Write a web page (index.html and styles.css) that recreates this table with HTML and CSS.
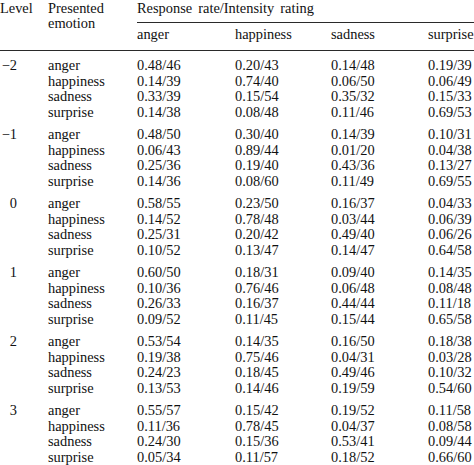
FILE: index.html
```html
<!DOCTYPE html>
<html>
<head>
<meta charset="utf-8">
<link rel="stylesheet" href="styles.css">
</head>
<body>
<div class="frame">
<table class="tbl">
  <colgroup>
    <col class="c-level"><col class="c-emo"><col class="c-d1"><col class="c-d2"><col class="c-d3"><col class="c-d4">
  </colgroup>
  <thead>
    <tr class="h1">
      <th rowspan="2" class="hl">Level</th>
      <th rowspan="2" class="hl">Presented<br>emotion</th>
      <th colspan="4" class="span">Response rate/Intensity rating</th>
    </tr>
    <tr class="h2">
      <th>anger</th><th>happiness</th><th>sadness</th><th>surprise</th>
    </tr>
  </thead>
  <tbody>
    <tr class="first"><td><span class="lv">−2</span></td><td>anger</td><td>0.48/46</td><td>0.20/43</td><td>0.14/48</td><td>0.19/39</td></tr>
    <tr><td></td><td>happiness</td><td>0.14/39</td><td>0.74/40</td><td>0.06/50</td><td>0.06/49</td></tr>
    <tr><td></td><td>sadness</td><td>0.33/39</td><td>0.15/54</td><td>0.35/32</td><td>0.15/33</td></tr>
    <tr><td></td><td>surprise</td><td>0.14/38</td><td>0.08/48</td><td>0.11/46</td><td>0.69/53</td></tr>
  </tbody>
  <tbody>
    <tr class="first"><td><span class="lv">−1</span></td><td>anger</td><td>0.48/50</td><td>0.30/40</td><td>0.14/39</td><td>0.10/31</td></tr>
    <tr><td></td><td>happiness</td><td>0.06/43</td><td>0.89/44</td><td>0.01/20</td><td>0.04/38</td></tr>
    <tr><td></td><td>sadness</td><td>0.25/36</td><td>0.19/40</td><td>0.43/36</td><td>0.13/27</td></tr>
    <tr><td></td><td>surprise</td><td>0.14/36</td><td>0.08/60</td><td>0.11/49</td><td>0.69/55</td></tr>
  </tbody>
  <tbody>
    <tr class="first"><td><span class="lv">0</span></td><td>anger</td><td>0.58/55</td><td>0.23/50</td><td>0.16/37</td><td>0.04/33</td></tr>
    <tr><td></td><td>happiness</td><td>0.14/52</td><td>0.78/48</td><td>0.03/44</td><td>0.06/39</td></tr>
    <tr><td></td><td>sadness</td><td>0.25/31</td><td>0.20/42</td><td>0.49/40</td><td>0.06/26</td></tr>
    <tr><td></td><td>surprise</td><td>0.10/52</td><td>0.13/47</td><td>0.14/47</td><td>0.64/58</td></tr>
  </tbody>
  <tbody>
    <tr class="first"><td><span class="lv">1</span></td><td>anger</td><td>0.60/50</td><td>0.18/31</td><td>0.09/40</td><td>0.14/35</td></tr>
    <tr><td></td><td>happiness</td><td>0.10/36</td><td>0.76/46</td><td>0.06/48</td><td>0.08/48</td></tr>
    <tr><td></td><td>sadness</td><td>0.26/33</td><td>0.16/37</td><td>0.44/44</td><td>0.11/18</td></tr>
    <tr><td></td><td>surprise</td><td>0.09/52</td><td>0.11/45</td><td>0.15/44</td><td>0.65/58</td></tr>
  </tbody>
  <tbody>
    <tr class="first"><td><span class="lv">2</span></td><td>anger</td><td>0.53/54</td><td>0.14/35</td><td>0.16/50</td><td>0.18/38</td></tr>
    <tr><td></td><td>happiness</td><td>0.19/38</td><td>0.75/46</td><td>0.04/31</td><td>0.03/28</td></tr>
    <tr><td></td><td>sadness</td><td>0.24/23</td><td>0.18/45</td><td>0.49/46</td><td>0.10/32</td></tr>
    <tr><td></td><td>surprise</td><td>0.13/53</td><td>0.14/46</td><td>0.19/59</td><td>0.54/60</td></tr>
  </tbody>
  <tbody>
    <tr class="first"><td><span class="lv">3</span></td><td>anger</td><td>0.55/57</td><td>0.15/42</td><td>0.19/52</td><td>0.11/58</td></tr>
    <tr><td></td><td>happiness</td><td>0.11/36</td><td>0.78/45</td><td>0.04/37</td><td>0.08/58</td></tr>
    <tr><td></td><td>sadness</td><td>0.24/30</td><td>0.15/36</td><td>0.53/41</td><td>0.09/44</td></tr>
    <tr><td></td><td>surprise</td><td>0.05/34</td><td>0.11/57</td><td>0.18/52</td><td>0.66/60</td></tr>
  </tbody>
</table>
</div>
</body>
</html>
```

FILE: styles.css
```css
html, body {
  margin: 0;
  padding: 0;
  background: #ffffff;
}
body {
  font-family: "Liberation Serif", "Times New Roman", serif;
  font-size: 14.4px;
  color: #111111;
}
.frame {
  width: 474px;
  height: 465px;
  overflow: hidden;
}
.tbl {
  border-collapse: collapse;
  table-layout: fixed;
  width: 540px;
  line-height: 15.4px;
}
.c-level { width: 48px; }
.c-emo { width: 89px; }
.c-d1 { width: 98px; }
.c-d2 { width: 96px; }
.c-d3 { width: 97px; }
.c-d4 { width: 112px; }
th, td {
  padding: 0;
  text-align: left;
  vertical-align: top;
  font-weight: normal;
  white-space: nowrap;
}
.h1 th {
  padding-top: 1px;
  line-height: 15px;
}
.h1 .hl {
  border-bottom: 1px solid #2a2a2a;
}
.h1 .span {
  padding-bottom: 6px;
  border-bottom: 1px solid #2a2a2a;
  word-spacing: 2.5px;
}
.h2 th {
  padding-top: 4px;
  padding-bottom: 8px;
  line-height: 15px;
  border-bottom: 1px solid #2a2a2a;
}
tbody tr.first td {
  padding-top: 7.4px;
}
.lv {
  display: inline-block;
  width: 17px;
  text-align: right;
}
```
